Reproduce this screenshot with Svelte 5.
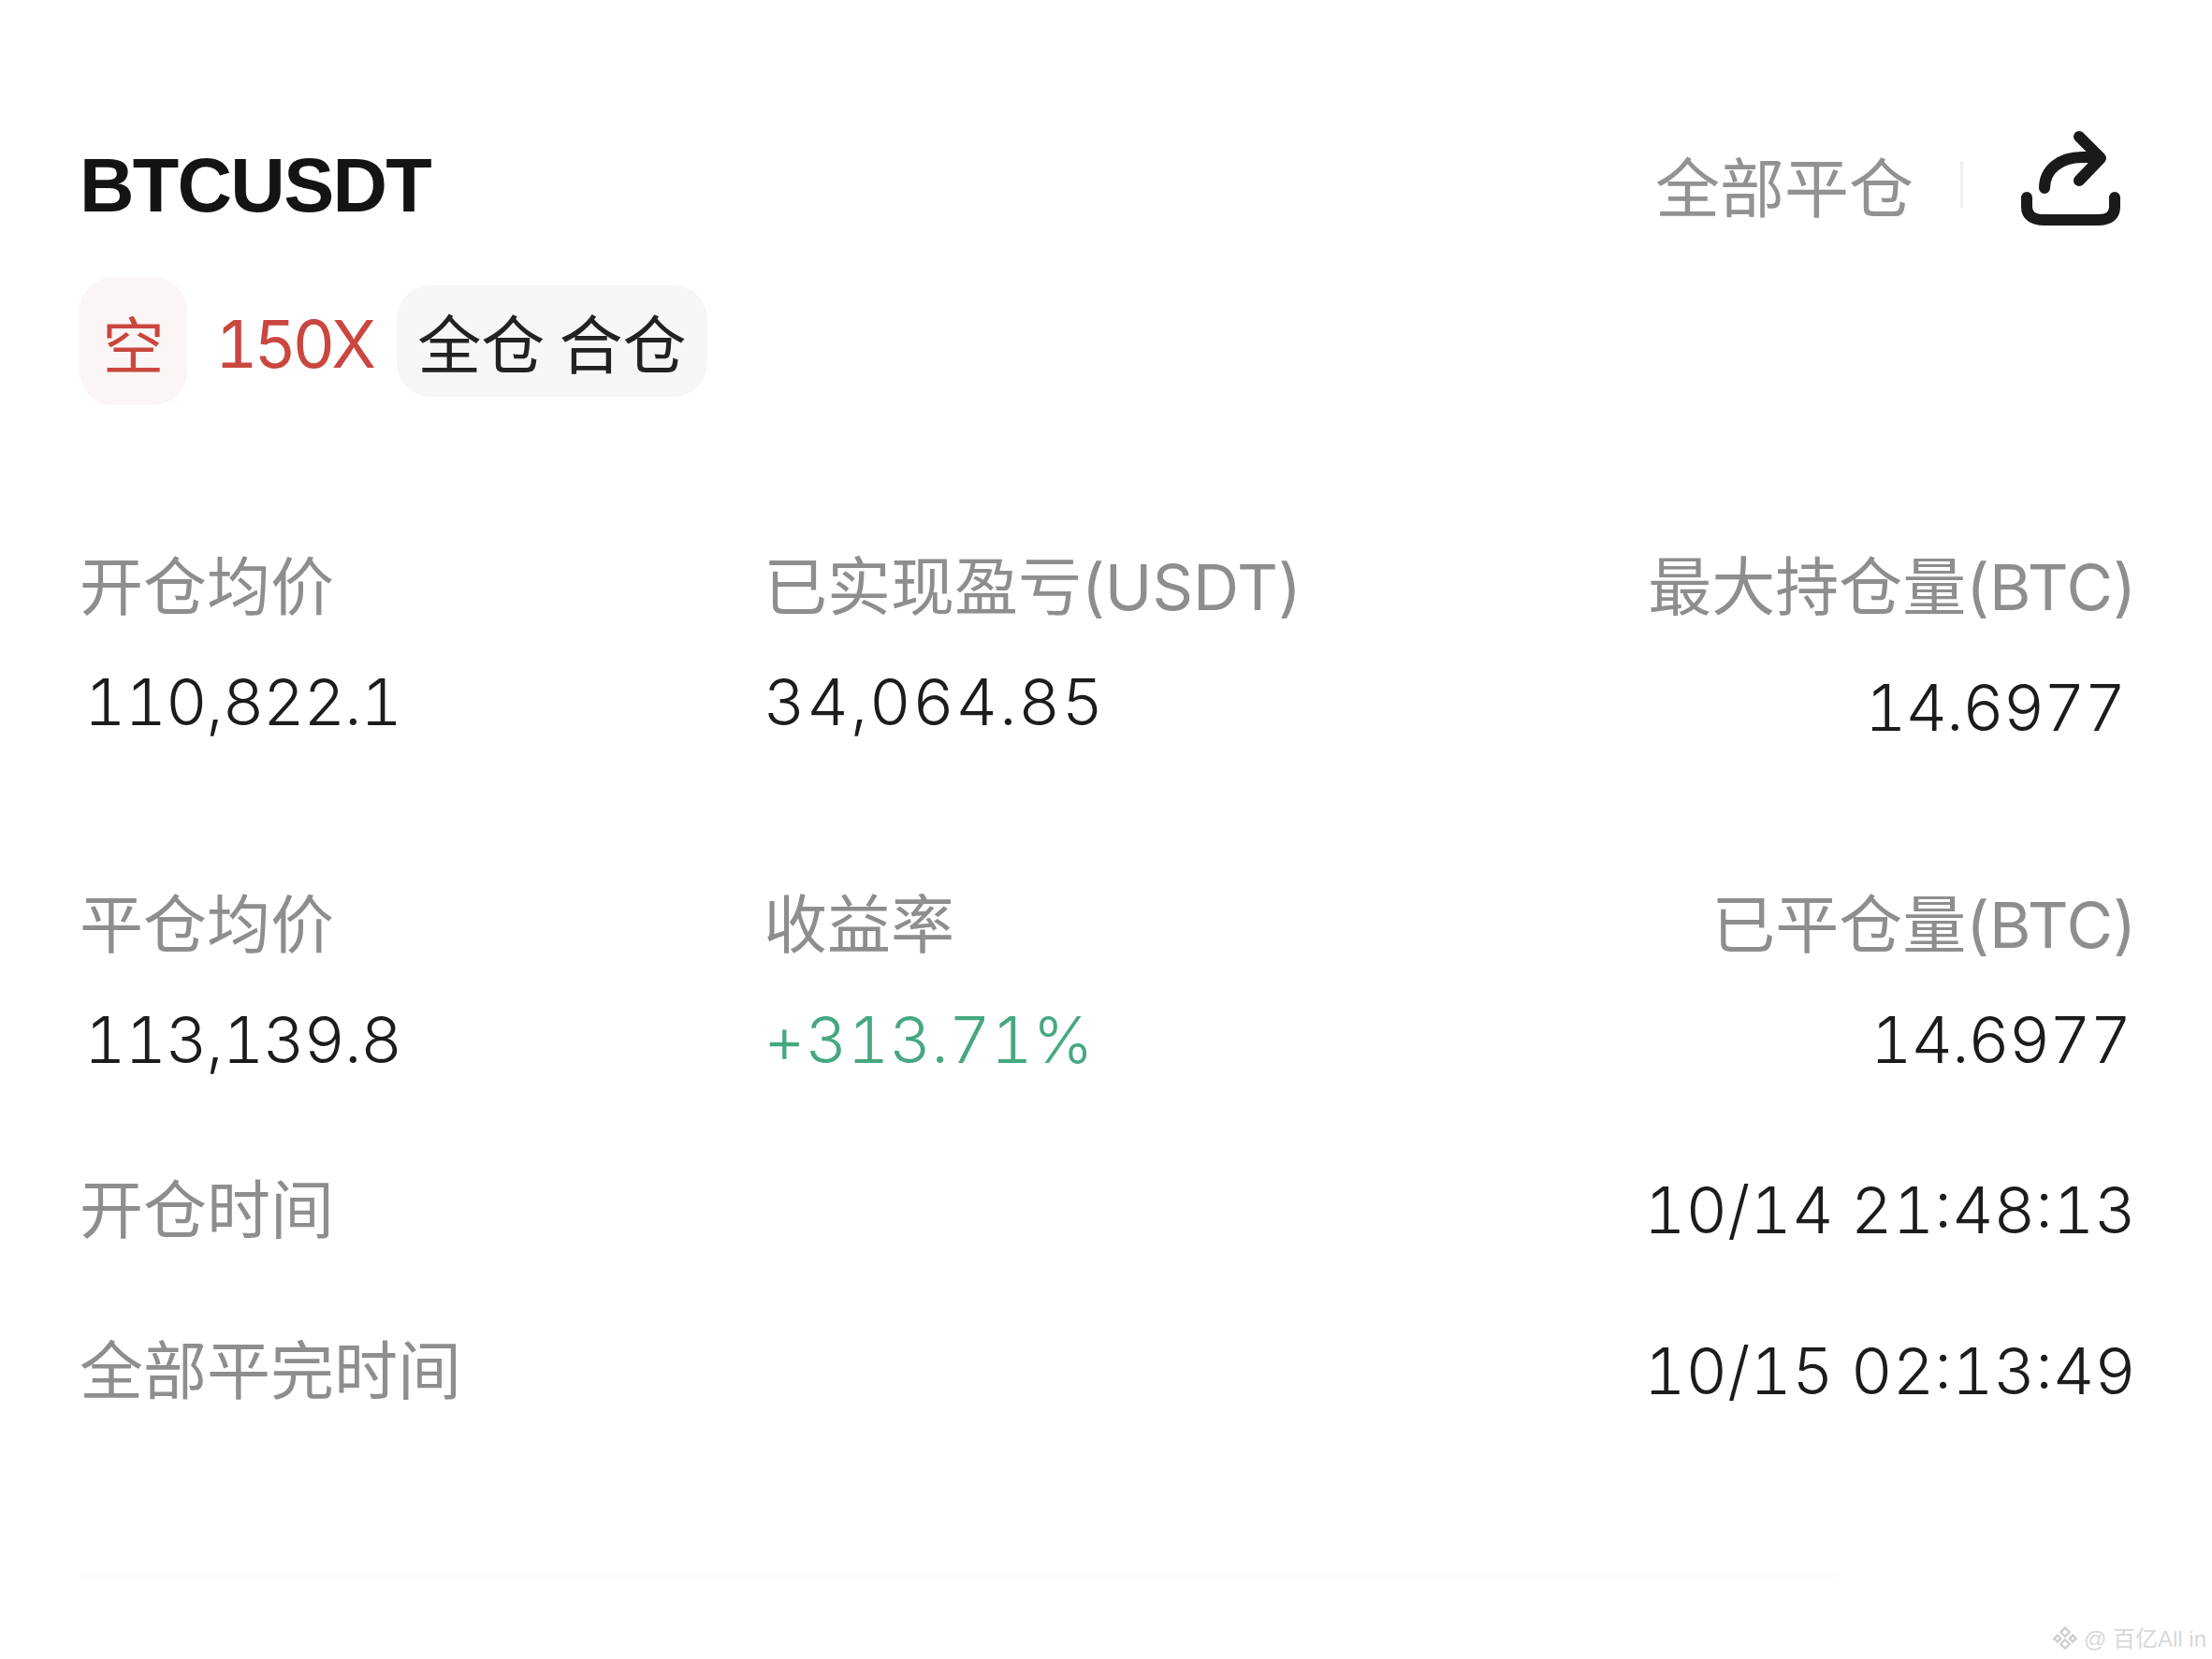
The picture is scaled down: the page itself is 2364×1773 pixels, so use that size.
<script>
  const topStats = [
    { label: '开仓均价', value: '110,822.1' },
    { label: '已实现盈亏(USDT)', value: '34,064.85' },
    { label: '最大持仓量(BTC)', value: '14.6977', shift: true }
  ];
  const midStats = [
    { label: '平仓均价', value: '113,139.8' },
    { label: '收益率', value: '+313.71%', up: true },
    { label: '已平仓量(BTC)', value: '14.6977' }
  ];
  const times = [
    { label: '开仓时间', value: '10/14 21:48:13' },
    { label: '全部平完时间', value: '10/15 02:13:49' }
  ];
</script>

<div class="page">
  <header class="head">
    <h1 class="symbol">BTCUSDT</h1>
    <div class="actions">
      <span class="close-all">全部平仓</span>
      <span class="sep"></span>
      <svg class="share" viewBox="0 0 115 107" fill="none" stroke="#1a1a1a" stroke-width="12" stroke-linecap="round" stroke-linejoin="round">
        <path d="M10 73V83Q10 97 29 97H86Q104 97 104 83V73" />
        <path d="M29 63C29 43 46 30 69 30H87" />
        <path d="M66 8L89 31L66 55" />
      </svg>
    </div>
  </header>

  <div class="tags">
    <span class="side">空</span>
    <span class="lev">150X</span>
    <span class="mode">全仓 合仓</span>
  </div>

  <section class="grid first">
    {#each topStats as s}
      <div class="stat">
        <div class="label">{s.label}</div>
        <div class="value" class:shift={s.shift}>{s.value}</div>
      </div>
    {/each}
  </section>

  <section class="grid second">
    {#each midStats as s}
      <div class="stat">
        <div class="label">{s.label}</div>
        <div class="value" class:up={s.up}>{s.value}</div>
      </div>
    {/each}
  </section>

  <section class="times">
    {#each times as t}
      <div class="time-row">
        <span class="label">{t.label}</span>
        <span class="value">{t.value}</span>
      </div>
    {/each}
  </section>

  <div class="rule"></div>

  <div class="mark">
    <svg width="28" height="28" viewBox="0 0 24 24" fill="none" stroke="#cfcfcf" stroke-width="2"><path d="M12 3l4 4-4 4-4-4zM5 10l3 3-3 3-3-3zM19 10l3 3-3 3-3-3zM12 14l4 4-4 4-4-4z" /></svg>
    <span>@ 百亿All in</span>
  </div>
</div>

<style>
  :global(body) {
    margin: 0;
    background: #fff;
  }

  .page {
    position: relative;
    width: 2364px;
    height: 1773px;
    box-sizing: border-box;
    padding: 136px 81px 0 85px;
    font-family: "Inter", "Noto Sans CJK SC", sans-serif;
    color: #1c1c1c;
    overflow: hidden;
  }

  .head {
    display: flex;
    align-items: center;
    justify-content: space-between;
    height: 122px;
  }

  .symbol {
    margin: 3px 0 0;
    font-family: "Liberation Sans", sans-serif;
    font-size: 81px;
    font-weight: 700;
    letter-spacing: -1.7px;
    color: #141414;
  }

  .actions {
    display: flex;
    align-items: center;
    margin-right: 12px;
  }

  .close-all {
    font-family: "Noto Sans CJK SC", sans-serif;
    font-size: 69px;
    font-weight: 400;
    color: #929292;
  }

  .sep {
    width: 3px;
    height: 50px;
    margin: 0 58px 0 50px;
    background: #f0f0f0;
  }

  .share {
    width: 115px;
    height: 107px;
    margin-top: -12px;
  }

  .tags {
    display: flex;
    align-items: center;
    margin-top: 38px;
    height: 137px;
  }

  .side {
    display: flex;
    align-items: center;
    justify-content: center;
    width: 115px;
    height: 137px;
    border-radius: 36px;
    background: #fbf6f5;
    color: #c9473f;
    font-family: "Noto Sans CJK SC", sans-serif;
    font-size: 66px;
    font-weight: 400;
  }

  .lev {
    margin: 6px 0 0 30px;
    color: #c9473f;
    font-size: 70px;
    font-weight: 400;
    font-variant-numeric: tabular-nums;
    letter-spacing: -4px;
  }

  .mode {
    display: flex;
    align-items: center;
    justify-content: center;
    margin-left: 26px;
    width: 332px;
    height: 119px;
    border-radius: 36px;
    background: #f6f6f6;
    color: #222;
    font-family: "Noto Sans CJK SC", sans-serif;
    font-size: 68px;
    font-weight: 400;
    white-space: nowrap;
  }

  .grid {
    display: grid;
    grid-template-columns: 731px 1fr 1fr;
  }

  .first {
    margin-top: 149px;
  }

  .second {
    margin-top: 148px;
  }

  .stat:last-child {
    text-align: right;
  }

  .label {
    font-family: "Inter", "Noto Sans CJK SC", sans-serif;
    font-size: 68px;
    font-weight: 400;
    line-height: 90px;
    color: #8e8e8e;
    white-space: nowrap;
  }

  .value {
    margin-top: 33px;
    font-size: 69px;
    font-weight: 300;
    font-variant-numeric: tabular-nums;
    line-height: 90px;
    letter-spacing: 1.7px;
    white-space: nowrap;
  }

  .stat:first-child .value {
    padding-left: 5px;
    letter-spacing: -1.2px;
  }

  .stat:last-child .value {
    padding-right: 6px;
    letter-spacing: -1.2px;
  }

  .value.shift {
    position: relative;
    top: 6px;
    right: 6px;
  }

  .value.up {
    color: #46a880;
    letter-spacing: 0.2px;
  }

  .times {
    margin-top: 92px;
  }

  .time-row {
    display: flex;
    align-items: center;
    justify-content: space-between;
    height: 90px;
    margin-bottom: 82px;
  }

  .time-row .value {
    margin-top: 0;
    letter-spacing: 0;
  }

  .rule {
    position: absolute;
    left: 85px;
    right: 400px;
    top: 1683px;
    height: 2px;
    background: #fafafa;
  }

  .mark {
    position: absolute;
    right: 6px;
    bottom: 6px;
    display: flex;
    align-items: center;
    gap: 6px;
    font-family: "Liberation Sans", "Noto Sans CJK SC", sans-serif;
    font-size: 24px;
    color: #d8d8d8;
  }
</style>
